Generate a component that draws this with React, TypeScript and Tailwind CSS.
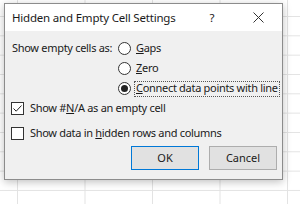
import React from "react";

function Radio({ checked }: { checked?: boolean }) {
  return (
    <span className="w-[13px] h-[13px] rounded-full border border-[#333] bg-white flex items-center justify-center shrink-0">
      {checked && <span className="w-[7px] h-[7px] rounded-full bg-[#222]" />}
    </span>
  );
}

function Checkbox({ checked }: { checked?: boolean }) {
  return (
    <span className="w-[13px] h-[13px] border border-[#333] bg-white flex items-center justify-center shrink-0">
      {checked && (
        <svg width="11" height="11" viewBox="0 0 11 11">
          <path d="M1.5 5.5 L4.2 8.2 L9.5 2.5" fill="none" stroke="#222" strokeWidth="1" />
        </svg>
      )}
    </span>
  );
}

export default function App() {
  return (
    <div className="w-[300px] h-[204px] overflow-hidden pt-[3px] pl-[4px] bg-white bg-[linear-gradient(to_right,#e3e3e3_1px,transparent_1px),linear-gradient(to_bottom,#e3e3e3_1px,transparent_1px)] bg-[size:67.5px_19.33px] bg-[position:17px_16px] font-['Noto_Sans',sans-serif] text-[#1a1a1a] whitespace-nowrap">
      <div className="w-[279px] h-[177px] border border-[#8c8c8c] bg-[#f0f0f0] shadow-[0_2px_8px_rgba(0,0,0,0.25)] flex flex-col">
        <div className="h-[27px] bg-white flex items-center pl-[7px] text-[11.5px] tracking-[-0.2px]">
          <span className="w-[194px]">Hidden and Empty Cell Settings</span>
          <span className="w-[12px] text-center">?</span>
          <span className="ml-[35px]">
            <svg width="11" height="11" viewBox="0 0 11 11">
              <path d="M0.5 0.5 L10.5 10.5 M10.5 0.5 L0.5 10.5" stroke="#333" strokeWidth="1" />
            </svg>
          </span>
        </div>

        <div className="flex flex-col pt-[7px] text-[11px] tracking-[-0.3px]">
          <div className="flex">
            <div className="w-[113px] pl-[7px] h-[20px] flex items-center">Show empty cells as:</div>
            <div className="flex flex-col">
              <div className="h-[20px] flex items-center gap-[5px]">
                <Radio />
                <span>
                  <span className="underline">G</span>aps
                </span>
              </div>
              <div className="h-[20px] flex items-center gap-[5px]">
                <Radio />
                <span>
                  <span className="underline">Z</span>ero
                </span>
              </div>
              <div className="h-[21px] flex items-center gap-[3px]">
                <Radio checked />
                <span className="h-[16px] pl-[1px] pr-[1px] border border-dotted border-[#555] flex items-center">
                  <span className="underline">C</span>onnect data points with line
                </span>
              </div>
            </div>
          </div>

          <div className="h-[18px] flex items-center gap-[6px] pl-[6px]">
            <Checkbox checked />
            <span>
              Show #<span className="underline">N</span>/A as an empty cell
            </span>
          </div>
          <div className="h-[18px] mt-[7px] flex items-center gap-[6px] pl-[6px]">
            <Checkbox />
            <span>
              Show data in <span className="underline">h</span>idden rows and columns
            </span>
          </div>

          <div className="flex justify-end gap-[10px] pr-[5px] mt-[4px] tracking-normal">
            <button className="w-[68px] h-[24px] border border-[#0078d7] bg-[#e1e1e1] text-[11px]">OK</button>
            <button className="w-[68px] h-[24px] border border-[#adadad] bg-[#e1e1e1] text-[11px]">Cancel</button>
          </div>
        </div>
      </div>
    </div>
  );
}
